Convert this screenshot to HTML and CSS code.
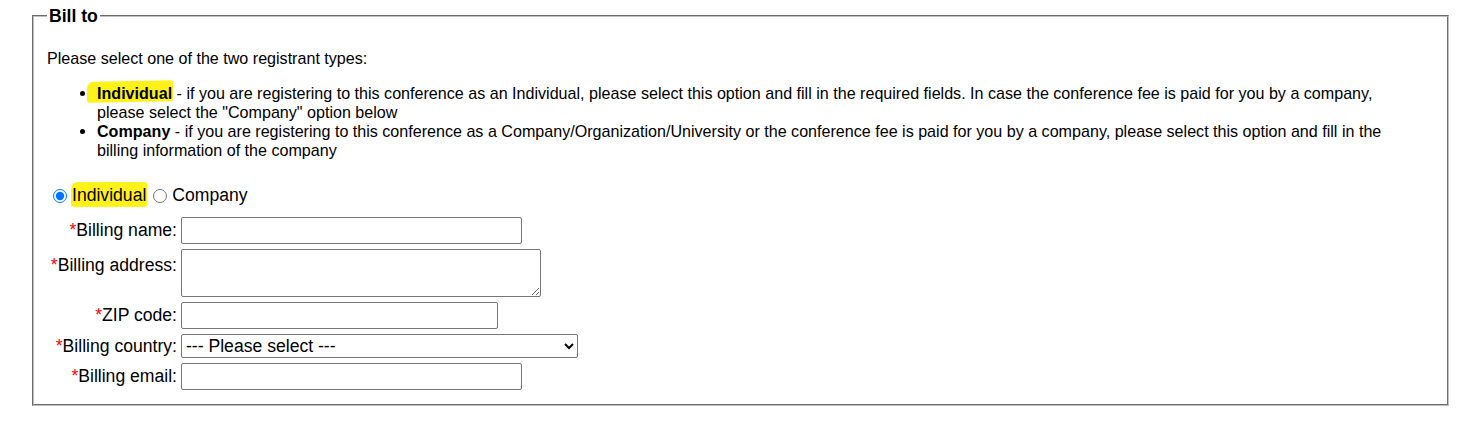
FILE: index.html
```html
<!DOCTYPE html>
<html>
<head>
<meta charset="utf-8">
<link rel="stylesheet" href="styles.css">
</head>
<body>
<div class="page">
  <fieldset class="billto">
    <legend class="legend">Bill to</legend>
    <p class="intro">Please select one of the two registrant types:</p>
    <ul class="types">
      <li><b class="mark mark-bullet">Individual</b> - if you are registering to this conference as an Individual, please select this option and fill in the required fields. In case the conference fee is paid for you by a company, please select the "Company" option below</li>
      <li><b>Company</b> - if you are registering to this conference as a Company/Organization/University or the conference fee is paid for you by a company, please select this option and fill in the billing information of the company</li>
    </ul>
    <div class="radios">
      <input type="radio" name="rtype" id="r-ind" checked><label for="r-ind" class="mark mark-radio">Individual</label>
      <input type="radio" name="rtype" id="r-comp"><label for="r-comp">Company</label>
    </div>
    <div class="form">
      <label class="lbl lbl-input"><span class="req">*</span>Billing name:</label>
      <div class="field"><input type="text" class="inp w-name"></div>

      <label class="lbl lbl-area"><span class="req">*</span>Billing address:</label>
      <div class="field"><textarea class="area"></textarea></div>

      <label class="lbl lbl-input"><span class="req">*</span>ZIP code:</label>
      <div class="field"><input type="text" class="inp w-zip"></div>

      <label class="lbl lbl-select"><span class="req">*</span>Billing country:</label>
      <div class="field"><select class="sel"><option>--- Please select ---</option></select></div>

      <label class="lbl lbl-input"><span class="req">*</span>Billing email:</label>
      <div class="field"><input type="text" class="inp w-name"></div>
    </div>
  </fieldset>
</div>
</body>
</html>
```

FILE: styles.css
```css
html, body {
  margin: 0;
  padding: 0;
  background: #ffffff;
}
body {
  font-family: "Liberation Sans", Arial, sans-serif;
  color: #000000;
}
.page {
  padding: 6px 23px 0 32px;
}
.billto {
  margin: 0;
  border: 2px groove #c0c0c0;
  padding: 0 13px 14px 13px;
  box-sizing: border-box;
  height: 400px;
}
.legend {
  font-size: 17.6px;
  font-weight: bold;
  padding: 0 2px;
  line-height: 20px;
  margin-left: 0;
}
.intro {
  font-size: 16.1px;
  line-height: 19px;
  margin: 23px 0 16px 0;
}
.types {
  font-size: 16.1px;
  line-height: 19px;
  margin: 0;
  padding-left: 50px;
  padding-right: 30px;
}
.mark {
  position: relative;
  z-index: 0;
}
.mark::before {
  content: "";
  position: absolute;
  z-index: -1;
  background: #fff21a;
}
.mark-bullet::before {
  left: -10px;
  right: -1px;
  top: -3px;
  bottom: 0;
  border-radius: 7px 2px 2px 3px;
  transform: skewY(-1deg);
}
.radios {
  font-size: 17.6px;
  line-height: 21px;
  margin-top: 25px;
  display: flex;
  align-items: center;
}
.radios input {
  margin: 0 5px 0 6px;
  width: 14px;
  height: 14px;
}
.radios input + label + input {
  margin-left: 7px;
}
.mark-radio::before {
  left: -1px;
  right: -1px;
  top: -3px;
  bottom: -1px;
  border-radius: 7px 2px 2px 3px;
}
.form {
  display: grid;
  grid-template-columns: 130px auto;
  column-gap: 4px;
  row-gap: 5px;
  margin-top: 11px;
  font-size: 17.6px;
}
.lbl {
  text-align: right;
  line-height: 20px;
  white-space: nowrap;
}
.lbl-input {
  padding-top: 3px;
}
.lbl-area {
  padding-top: 6px;
}
.lbl-select {
  padding-top: 2px;
}
.req {
  color: #ff0000;
}
.field {
  display: flex;
  align-items: flex-start;
}
.inp {
  box-sizing: border-box;
  height: 27px;
  border: 1px solid #767676;
  border-radius: 2px;
  font-size: 16px;
  font-family: "Liberation Sans", Arial, sans-serif;
  padding: 1px 2px;
  margin: 0;
  background: #ffffff;
}
.w-name {
  width: 341px;
}
.w-zip {
  width: 317px;
}
.area {
  box-sizing: border-box;
  width: 360px;
  height: 48px;
  border: 1px solid #767676;
  border-radius: 2px;
  margin: 0;
  font-size: 13px;
  padding: 2px;
}
.sel {
  box-sizing: border-box;
  width: 397px;
  height: 24px;
  margin: 0;
  font-size: 17.6px;
  font-family: "Liberation Sans", Arial, sans-serif;
  border: 1px solid #767676;
  border-radius: 2px;
  background: #ffffff;
  color: #000000;
}
```
